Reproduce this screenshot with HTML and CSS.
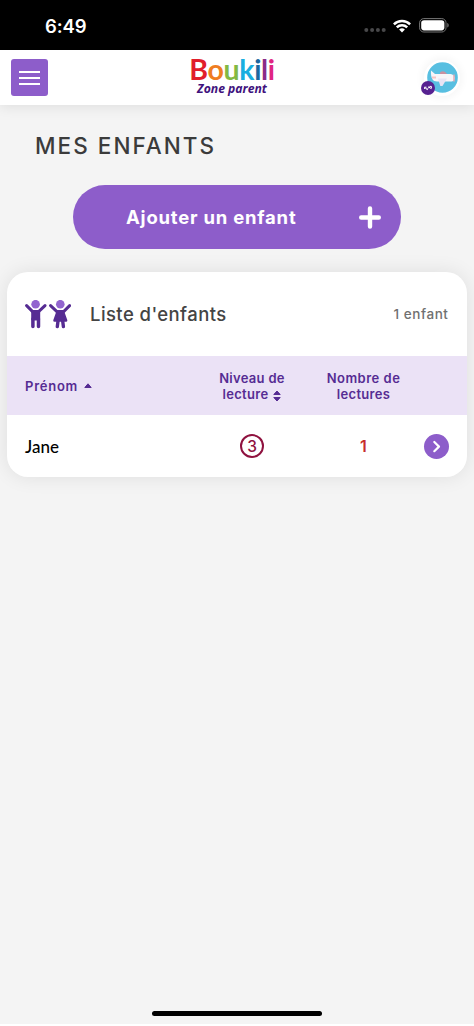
FILE: index.html
```html
<!DOCTYPE html>
<html lang="fr">
<head>
<meta charset="utf-8">
<title>Boukili – Zone parent</title>
<link rel="stylesheet" href="styles.css">
</head>
<body>
<div class="screen">
  <div class="status">
    <span class="time">6:49</span>
    <div class="indicators">
      <svg class="dots" width="22" height="6" viewBox="0 0 22 6" fill="#48484a"><circle cx="2.3" cy="3" r="2"/><circle cx="8.1" cy="3" r="2"/><circle cx="13.9" cy="3" r="2"/><circle cx="19.7" cy="3" r="2"/></svg>
      <svg class="wifi" width="18" height="14" viewBox="0 0 18 14" fill="none" stroke="#fff" stroke-width="2.5"><path d="M.9 5.3a11.6 11.6 0 0 1 16.2 0M3.8 8.4a7.4 7.4 0 0 1 10.4 0"/><path d="M9 13.4 6.1 10.6a4.1 4.1 0 0 1 5.8 0z" fill="#fff" stroke="none"/></svg>
      <svg class="battery" width="31" height="15" viewBox="0 0 31 15"><rect x=".6" y=".6" width="26.4" height="13.4" rx="4.2" fill="none" stroke="#777" stroke-width="1"/><rect x="2.2" y="2.2" width="23.2" height="10.2" rx="2.8" fill="#fff"/><path d="M28.3 5v4.6c1.9-.7 1.9-3.9 0-4.6z" fill="#777"/></svg>
    </div>
  </div>
  <header class="header">
    <button class="menu" aria-label="Menu"><i></i><i></i><i></i></button>
    <div class="brand">
      <div class="logo"><span class="red">B</span><span class="orange">o</span><span class="green">u</span><span class="cyan">k</span><span class="blue">i</span><span class="violet">l</span><span class="pink">i</span></div>
      <div class="zone">Zone parent</div>
    </div>
    <div class="avatar">
      <svg width="31" height="31" viewBox="0 0 31 31"><circle cx="15.5" cy="15.5" r="15.3" fill="#58bfe1"/><path d="M13 10.500q4-3 7 1.500v1.500h-7z" fill="#c990a0"/><path d="M4 8.500 8 12h14c4 0 6 2 5.700 4.500s-2 3-5 3H10c-4 0-6.500-3-6-11z" fill="#f8f5f8"/><path d="m11 16.500 9 0-4.500 7.500h-2.200z" fill="#e9e4f4"/><path d="M5 15.500h4" stroke="#f6c4c4" stroke-width="2"/><path d="M27 12.500v7" stroke="#e6a9b4" stroke-width="1.500"/></svg>
      <svg class="badge" width="14" height="14" viewBox="0 0 14 14"><circle cx="7" cy="7" r="7" fill="#562190"/><path d="M6.300 8.500 3.800 6.500M3.600 8V6.200h1.900M7.700 6l2.500 1.600M8.500 5.400h1.900v2.100M6.200 9V7.200M7.800 5.500v1.900" fill="none" stroke="#fff" stroke-width="1"/></svg>
    </div>
  </header>
  <main class="main">
    <h1 class="title">MES ENFANTS</h1>
    <button class="add"><span class="add-label">Ajouter un enfant</span><svg width="22" height="23" viewBox="0 0 22 23" stroke="#fff" stroke-width="4.400" stroke-linecap="round"><path d="M11 2.500v18M2.200 11.500h17.600"/></svg></button>
    <section class="card">
      <div class="card-head">
        <svg class="kids" width="46" height="29" viewBox="0 0 46 29" fill="none" stroke="#562c93" stroke-linecap="round" stroke-linejoin="round"><g fill="#9264cf" stroke="none"><circle cx="10.600" cy="4.200" r="4.300"/><circle cx="35.300" cy="4.200" r="4.300"/></g><path d="M1.600 5.600 7.600 11.600h6L20 5.600M25.600 5.600l6.300 6h6.700l6-6" stroke-width="3"/><path d="M7.800 12h5.800v7H7.800z" fill="#562c93" stroke-width="3.200"/><path d="M7.900 19v7.600M13.500 19v7.600" stroke-width="3.500"/><path d="M32.500 12h5.600l3 8.500H29.500z" fill="#562c93" stroke-width="2.500"/><path d="M33 21l-.7 5.600M37.700 21l.7 5.600" stroke-width="3.400"/></svg>
        <h2 class="card-title">Liste d'enfants</h2>
        <span class="count">1 enfant</span>
      </div>
      <div class="row labels">
        <div class="name"><span class="l-name">Prénom</span><svg class="up" width="8" height="5" viewBox="0 0 8 5"><path d="M.8 4.500 4 .8l3.200 3.700z" fill="#562c93" stroke="#562c93" stroke-linejoin="round"/></svg></div>
        <div class="cell">Niveau de<br><span class="l-lec">lecture</span><svg class="sort" width="8" height="12" viewBox="0 0 8 12"><path d="M.8 4.500 4 1l3.200 3.500zM.8 7.500 4 11l3.200-3.500z" fill="#562c93" stroke="#562c93" stroke-linejoin="round"/></svg></div>
        <div class="cell"><span class="l-nom">Nombre de</span><br>lectures</div>
        <div></div>
      </div>
      <div class="row child">
        <div class="name jane">Jane</div>
        <div class="cell"><span class="level">3</span></div>
        <div class="cell reads">1</div>
        <button class="go" aria-label="Voir"><svg width="25" height="25" viewBox="0 0 25 25" fill="none" stroke="#fff" stroke-width="2.200" stroke-linecap="round" stroke-linejoin="round"><path d="m10.300 8 4.700 4.600-4.700 4.600"/></svg></button>
      </div>
    </section>
  </main>
  <div class="home"></div>
</div>
</body>
</html>
```
FILE: styles.css
```css
* { box-sizing: border-box; }
body { margin: 0; background: #fff; font-family: Inter, "Open Sans", sans-serif; }
button { border: 0; padding: 0; font: inherit; }
.screen { width: 474px; height: 1024px; background: #f4f4f4; display: flex; flex-direction: column; }
.status { height: 50px; background: #000; color: #fff; padding: 0 24px 0 45px; display: flex; align-items: center; justify-content: space-between; }
.time { font-size: 18.5px; font-weight: 600; letter-spacing: -.1px; margin-top: 2px; }
.indicators { display: flex; align-items: center; margin-top: 1px; }
.dots { margin: 9px 7px 0 0; }
.wifi { margin-right: 8px; }
.header { height: 55px; background: #fff; box-shadow: 0 2px 12px rgba(0, 0, 0, .09); display: grid; grid-template-columns: 166px 110px 1fr; align-items: center; padding: 0 14px 0 11px; }
.menu { width: 37px; height: 37px; border-radius: 3px; background: #8d5dca; display: flex; flex-direction: column; align-items: center; justify-content: center; gap: 4px; }
.menu i { width: 21px; height: 2px; background: #fff; }
.brand { text-align: center; width: 110px; margin-top: -5px; }
.logo { font: 700 28.5px/31px Lato, sans-serif; letter-spacing: -.35px; white-space: nowrap; }
.red { color: #e11e2b; } .orange { color: #ef7d22; } .green { color: #83b943; } .cyan { color: #19aee0; } .blue { color: #1c679f; } .violet { color: #8b2b88; } .pink { color: #e02582; }
.zone { font: italic 700 12.2px/14px "Open Sans", sans-serif; color: #3f127d; white-space: nowrap; margin-top: -3px; }
.avatar { justify-self: end; position: relative; width: 36px; height: 36px; border-radius: 50%; display: flex; align-items: center; justify-content: center; background: #fff; box-shadow: 0 0 7px 3px rgba(0, 0, 0, .035); }
.badge { position: absolute; left: -3px; bottom: 1px; }
.main { flex: 1; padding: 0 7px; display: flex; flex-direction: column; }
.title { margin: 26px 0 0 28px; font-size: 22.5px; line-height: 30px; font-weight: 550; letter-spacing: 2.05px; color: #3b3b3b; white-space: nowrap; }
.add { width: 328px; height: 64px; border-radius: 32px; margin: 24px 0 0 66px; background: #8d5dca; color: #fff; display: flex; align-items: center; justify-content: space-between; padding: 0 20px 0 53px; }
.add-label { font-size: 18.5px; font-weight: 700; letter-spacing: .78px; }
.card { margin-top: 23px; width: 460px; background: #fff; border-radius: 21px; box-shadow: 0 0 20px rgba(0, 0, 0, .09); overflow: hidden; }
.card-head { height: 84px; display: flex; align-items: center; padding: 0 19px 0 18px; }
.card-title { margin: 0 auto 0 19px; font-size: 18.5px; font-weight: 550; color: #444; letter-spacing: .42px; }
.count { font-size: 13.5px; font-weight: 500; color: #707070; letter-spacing: .55px; margin-right: -.5px; }
.row { display: grid; grid-template-columns: 189px 112px 111px 48px; align-items: center; }
.labels { height: 59px; background: #ebe2f6; color: #562c93; font-size: 13px; line-height: 16px; font-weight: 570; letter-spacing: .3px; }
.name { padding-left: 18px; }
.l-name { letter-spacing: .75px; }
.l-nom { letter-spacing: .5px; }
.cell { text-align: center; white-space: nowrap; }
.up { margin: 0 0 3px 6px; }
.sort { margin-left: 5px; vertical-align: -3px; }
.child { height: 62px; }
.jane { font: 500 17px Lato, sans-serif; color: #000; }
.level { display: inline-flex; width: 24px; height: 24px; border: 2px solid #8f123f; border-radius: 50%; align-items: center; justify-content: center; color: #8f123f; font-size: 15.5px; font-weight: 550; }
.reads { color: #c72d2d; font-size: 16px; font-weight: 600; }
.go { width: 25px; height: 25px; border-radius: 50%; background: #8d5dca; margin-left: 5px; display: flex; }
.home { width: 170px; height: 5px; border-radius: 3px; background: #000; align-self: center; margin-bottom: 8px; }
```
